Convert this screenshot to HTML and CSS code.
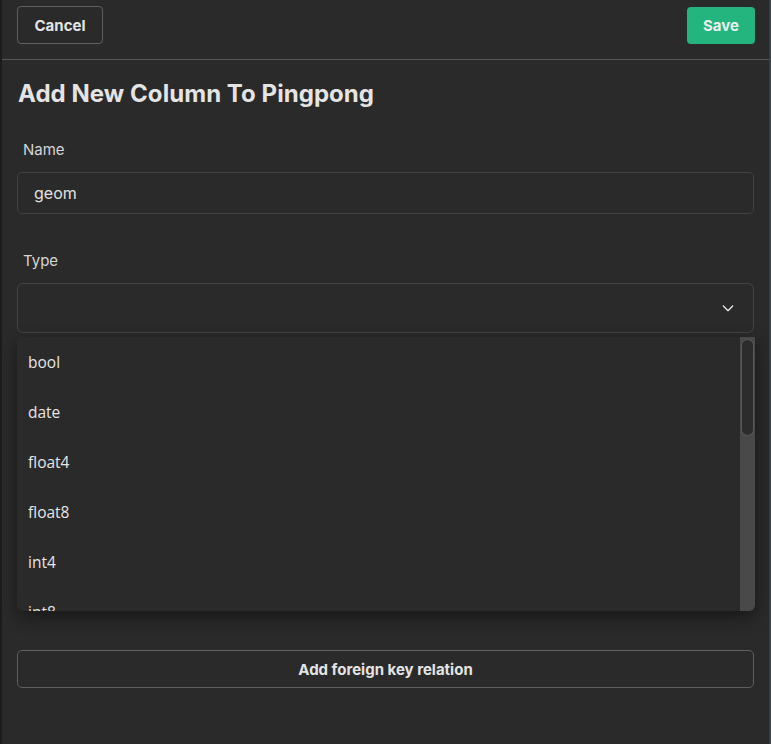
FILE: index.html
```html
<!DOCTYPE html>
<html lang="en">
<head>
    <meta charset="UTF-8">
    <meta name="viewport" content="width=device-width, initial-scale=1.0">
    <title>Add New Column</title>
    <link rel="stylesheet" href="styles.css">
</head>
<body>
    <div class="panel">
        <div class="toolbar">
            <button class="btn btn-cancel" type="button">Cancel</button>
            <button class="btn btn-save" type="button">Save</button>
        </div>

        <div class="content">
            <h2>Add New Column To Pingpong</h2>

            <div class="form-group">
                <label for="name">Name</label>
                <input class="field" type="text" id="name" name="name" value="geom">
            </div>

            <div class="form-group type-group">
                <label>Type</label>
                <div class="select">
                    <svg class="chevron" width="16" height="16" viewBox="0 0 24 24" fill="none" stroke="currentColor" stroke-width="2" stroke-linecap="round" stroke-linejoin="round"><polyline points="5 9 12 16 19 9"></polyline></svg>
                </div>
                <div class="menu">
                    <ul class="options">
                        <li>bool</li>
                        <li>date</li>
                        <li>float4</li>
                        <li>float8</li>
                        <li>int4</li>
                        <li>int8</li>
                    </ul>
                    <div class="scrollbar">
                        <div class="thumb"></div>
                    </div>
                </div>
            </div>

            <button class="btn btn-wide" type="button">Add foreign key relation</button>
        </div>
    </div>
</body>
</html>
```

FILE: styles.css
```css
html, body {
    margin: 0;
    padding: 0;
    height: 100%;
}
body {
    font-family: Inter, "Noto Sans", Arial, sans-serif;
    background-color: #1c1c1c;
    color: #e2e2e2;
}
.panel {
    box-sizing: border-box;
    height: 744px;
    margin-left: 2px;
    background-color: #2a2a2a;
    border-right: 2px solid #3a3f46;
}
.toolbar {
    display: flex;
    justify-content: space-between;
    align-items: flex-start;
    height: 60px;
    box-sizing: border-box;
    padding: 6px 14px 0 15px;
    border-bottom: 1px solid #575757;
}
.btn {
    font-family: Inter, Arial, sans-serif;
    font-weight: 700;
    font-size: 15px;
    color: #e4e4e4;
    cursor: pointer;
    border-radius: 4px;
}
.btn-cancel {
    height: 38px;
    width: 86px;
    background: transparent;
    border: 1px solid #5f5f5f;
}
.btn-save {
    margin-top: 1px;
    height: 37px;
    width: 68px;
    background-color: #24b47e;
    border: none;
    color: #e8f3ee;
}
.content {
    padding: 18px 15px 0 15px;
}
h2 {
    margin: 0 0 30px 1px;
    font-size: 24px;
    line-height: 32px;
    font-weight: 700;
    letter-spacing: 0.05px;
    color: #e4e4e4;
}
.form-group {
    margin-bottom: 37px;
}
label {
    display: block;
    margin: 0 0 12px 6px;
    font-size: 15px;
    line-height: 20px;
    color: #d6d6d6;
}
.field {
    display: block;
    width: 100%;
    height: 42px;
    box-sizing: border-box;
    padding: 0 16px;
    background-color: #2a2a2a;
    border: 1px solid #414141;
    border-radius: 5px;
    color: #e2e2e2;
    font-family: Inter, Arial, sans-serif;
    font-size: 16px;
    outline: none;
}
.type-group {
    position: relative;
    margin-bottom: 0;
}
.select {
    display: flex;
    justify-content: flex-end;
    align-items: center;
    height: 50px;
    box-sizing: border-box;
    padding-right: 17px;
    border: 1px solid #444444;
    border-radius: 6px;
    color: #e6e6e6;
}
.menu {
    position: absolute;
    left: 0;
    right: -1px;
    top: 86px;
    display: flex;
    height: 274px;
    background-color: #2a2a2a;
    border-radius: 6px 0 6px 6px;
    box-shadow: 0 6px 18px rgba(0, 0, 0, 0.45);
    overflow: hidden;
}
.options {
    flex: 1;
    list-style: none;
    margin: 0;
    padding: 0;
    overflow: hidden;
}
.options li {
    height: 50px;
    line-height: 50px;
    padding-left: 11px;
    font-family: "Open Sans", "Noto Sans", Arial, sans-serif;
    font-size: 15.5px;
    color: #e6e6e6;
}
.scrollbar {
    width: 15px;
    background-color: #494949;
    padding: 2px 1px;
    box-sizing: border-box;
}
.thumb {
    height: 97px;
    background-color: #2c2c2c;
    border: 1px solid #5a5a5a;
    border-radius: 7px;
    box-sizing: border-box;
}
.btn-wide {
    display: block;
    width: 100%;
    height: 38px;
    margin-top: 317px;
    background: transparent;
    border: 1px solid #5f5f5f;
    border-radius: 5px;
}
```
